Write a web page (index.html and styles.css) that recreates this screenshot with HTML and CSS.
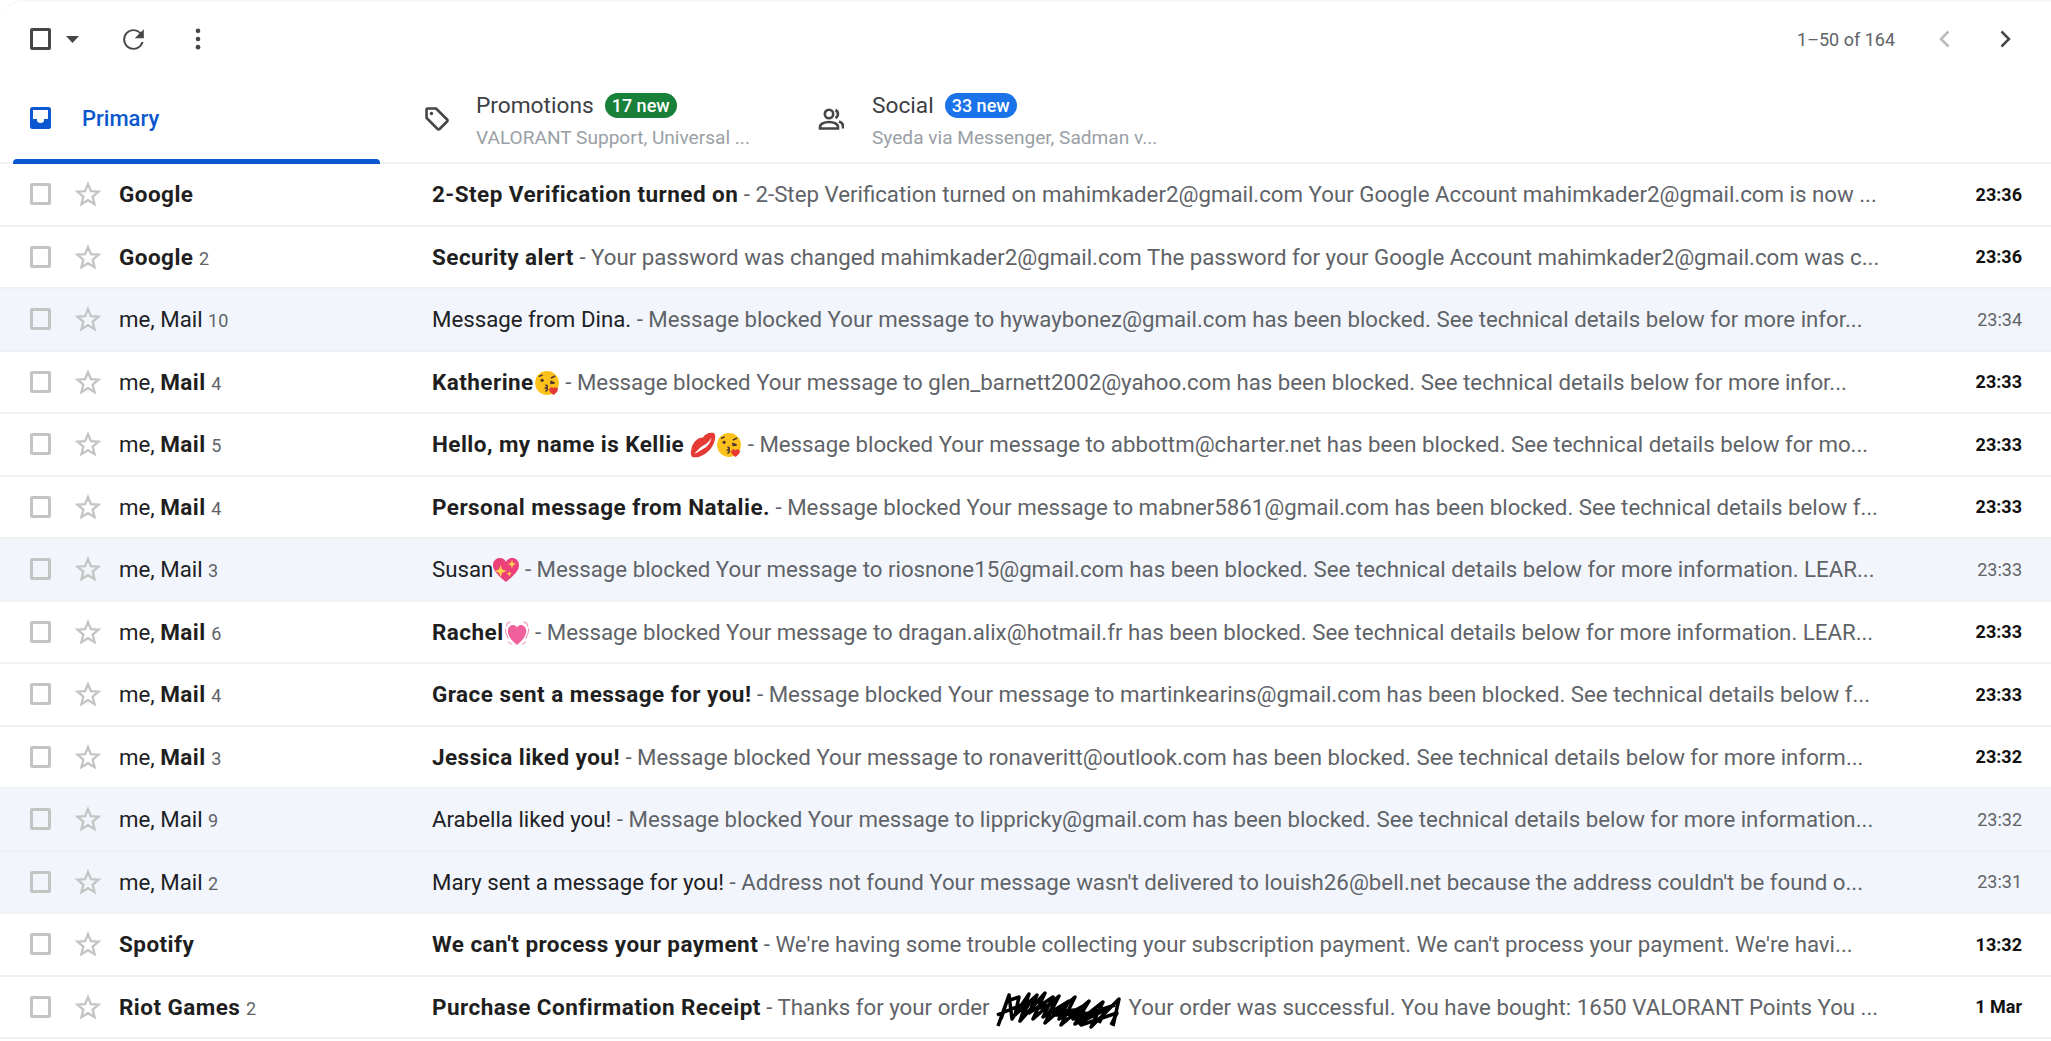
FILE: index.html
```html
<!DOCTYPE html>
<html lang="en">
<head>
  <meta charset="UTF-8">
  <title>Inbox</title>
  <link rel="stylesheet" href="styles.css">
</head>
<body>

<div class="mail">
  <div class="toolbar">
    <span class="box box-dark"></span>
    <svg class="caret" viewBox="0 0 13 7"><path d="M0 0h13L6.5 7z"/></svg>
    <svg class="tool refresh" viewBox="0 0 24 24"><path d="M17.65 6.35A7.96 7.96 0 0 0 12 4c-4.42 0-7.99 3.58-7.99 8s3.57 8 7.99 8c3.73 0 6.84-2.55 7.73-6h-1.6A6.5 6.5 0 0 1 12 18.5 6.5 6.5 0 0 1 12 5.5c1.8 0 3.4.74 4.58 1.92L13 11h7V4z"/></svg>
    <svg class="tool dots" viewBox="0 0 24 24"><circle cx="12" cy="5" r="2"/><circle cx="12" cy="12" r="2"/><circle cx="12" cy="19" r="2"/></svg>
    <div class="pager">
      <span class="range">1–50 of 164</span>
      <svg class="chev chev-off" viewBox="0 0 11 18"><path d="M9.5 1.5 2 9l7.5 7.5"/></svg>
      <svg class="chev" viewBox="0 0 11 18"><path d="M1.5 1.5 9 9l-7.5 7.5"/></svg>
    </div>
  </div>

  <div class="tabs">
    <div class="tab tab-primary">
      <svg class="inbox-icon" viewBox="0 0 21 22"><rect width="21" height="22" rx="2.500" fill="#0b57d0"/><path d="M3 3h15v9h-4v1.500c0 1.400-1.500 2.500-3.500 2.500S7 14.900 7 13.500V12H3z" fill="#fff"/></svg>
      <span class="tab-title">Primary</span>
    </div>
    <div class="tab tab-promo">
      <svg class="tab-icon tag" viewBox="0 0 26 26"><path d="M2.500 3.500a1 1 0 0 1 1-1h8.600l11 11a1.400 1.400 0 0 1 0 2l-7.500 7.500a1.400 1.400 0 0 1-2 0l-11-11z"/><circle cx="7.500" cy="7.500" r="1.700" class="icon-fill"/></svg>
      <div class="tab-text">
        <div class="tab-top"><span class="tab-name">Promotions</span><span class="badge badge-green">17 new</span></div>
        <div class="tab-sub">VALORANT Support, Universal ...</div>
      </div>
    </div>
    <div class="tab tab-social">
      <svg class="tab-icon people" viewBox="0 0 26 22"><circle cx="11" cy="6" r="4.200"/><path d="M2 20.500v-1.500c0-3 4-5 9-5s9 2 9 5v1.500z"/><path d="M17.500 2a4.500 4.500 0 0 1 0 8M21 13.500c2.500.8 4 2.500 4 4.500v2.500"/></svg>
      <div class="tab-text">
        <div class="tab-top"><span class="tab-name">Social</span><span class="badge badge-blue">33 new</span></div>
        <div class="tab-sub">Syeda via Messenger, Sadman v...</div>
      </div>
    </div>
  </div>

  <div class="row unread">
    <span class="box"></span><svg class="star" viewBox="0 0 24 24"><use href="#star-shape"/></svg>
    <div class="sender"><b>Google</b></div>
    <div class="line"><b>2-Step Verification turned on</b><span class="snippet"> - 2-Step Verification turned on mahimkader2@gmail.com Your Google Account mahimkader2@gmail.com is now ...</span></div>
    <div class="time">23:36</div>
  </div>
  <div class="row unread">
    <span class="box"></span><svg class="star" viewBox="0 0 24 24"><use href="#star-shape"/></svg>
    <div class="sender"><b>Google</b> <span class="count">2</span></div>
    <div class="line"><b>Security alert</b><span class="snippet"> - Your password was changed mahimkader2@gmail.com The password for your Google Account mahimkader2@gmail.com was c...</span></div>
    <div class="time">23:36</div>
  </div>
  <div class="row read">
    <span class="box"></span><svg class="star" viewBox="0 0 24 24"><use href="#star-shape"/></svg>
    <div class="sender">me, Mail <span class="count">10</span></div>
    <div class="line">Message from Dina.<span class="snippet"> - Message blocked Your message to hywaybonez@gmail.com has been blocked. See technical details below for more infor...</span></div>
    <div class="time">23:34</div>
  </div>
  <div class="row unread">
    <span class="box"></span><svg class="star" viewBox="0 0 24 24"><use href="#star-shape"/></svg>
    <div class="sender">me, <b>Mail</b> <span class="count">4</span></div>
    <div class="line"><b>Katherine</b><svg class="emoji" viewBox="0 0 24 24"><use href="#kiss-face"/></svg><span class="snippet"> - Message blocked Your message to glen_barnett2002@yahoo.com has been blocked. See technical details below for more infor...</span></div>
    <div class="time">23:33</div>
  </div>
  <div class="row unread">
    <span class="box"></span><svg class="star" viewBox="0 0 24 24"><use href="#star-shape"/></svg>
    <div class="sender">me, <b>Mail</b> <span class="count">5</span></div>
    <div class="line"><b>Hello, my name is Kellie </b><svg class="emoji" viewBox="0 0 24 24"><use href="#lips"/></svg><svg class="emoji" viewBox="0 0 24 24"><use href="#kiss-face"/></svg><span class="snippet"> - Message blocked Your message to abbottm@charter.net has been blocked. See technical details below for mo...</span></div>
    <div class="time">23:33</div>
  </div>
  <div class="row unread">
    <span class="box"></span><svg class="star" viewBox="0 0 24 24"><use href="#star-shape"/></svg>
    <div class="sender">me, <b>Mail</b> <span class="count">4</span></div>
    <div class="line"><b>Personal message from Natalie.</b><span class="snippet"> - Message blocked Your message to mabner5861@gmail.com has been blocked. See technical details below f...</span></div>
    <div class="time">23:33</div>
  </div>
  <div class="row read">
    <span class="box"></span><svg class="star" viewBox="0 0 24 24"><use href="#star-shape"/></svg>
    <div class="sender">me, Mail <span class="count">3</span></div>
    <div class="line">Susan<svg class="emoji" viewBox="0 0 24 24"><use href="#spark-heart"/></svg><span class="snippet"> - Message blocked Your message to riosnone15@gmail.com has been blocked. See technical details below for more information. LEAR...</span></div>
    <div class="time">23:33</div>
  </div>
  <div class="row unread">
    <span class="box"></span><svg class="star" viewBox="0 0 24 24"><use href="#star-shape"/></svg>
    <div class="sender">me, <b>Mail</b> <span class="count">6</span></div>
    <div class="line"><b>Rachel</b><svg class="emoji" viewBox="0 0 24 24"><use href="#beat-heart"/></svg><span class="snippet"> - Message blocked Your message to dragan.alix@hotmail.fr has been blocked. See technical details below for more information. LEAR...</span></div>
    <div class="time">23:33</div>
  </div>
  <div class="row unread">
    <span class="box"></span><svg class="star" viewBox="0 0 24 24"><use href="#star-shape"/></svg>
    <div class="sender">me, <b>Mail</b> <span class="count">4</span></div>
    <div class="line"><b>Grace sent a message for you!</b><span class="snippet"> - Message blocked Your message to martinkearins@gmail.com has been blocked. See technical details below f...</span></div>
    <div class="time">23:33</div>
  </div>
  <div class="row unread">
    <span class="box"></span><svg class="star" viewBox="0 0 24 24"><use href="#star-shape"/></svg>
    <div class="sender">me, <b>Mail</b> <span class="count">3</span></div>
    <div class="line"><b>Jessica liked you!</b><span class="snippet"> - Message blocked Your message to ronaveritt@outlook.com has been blocked. See technical details below for more inform...</span></div>
    <div class="time">23:32</div>
  </div>
  <div class="row read">
    <span class="box"></span><svg class="star" viewBox="0 0 24 24"><use href="#star-shape"/></svg>
    <div class="sender">me, Mail <span class="count">9</span></div>
    <div class="line">Arabella liked you!<span class="snippet"> - Message blocked Your message to lippricky@gmail.com has been blocked. See technical details below for more information...</span></div>
    <div class="time">23:32</div>
  </div>
  <div class="row read">
    <span class="box"></span><svg class="star" viewBox="0 0 24 24"><use href="#star-shape"/></svg>
    <div class="sender">me, Mail <span class="count">2</span></div>
    <div class="line">Mary sent a message for you!<span class="snippet"> - Address not found Your message wasn't delivered to louish26@bell.net because the address couldn't be found o...</span></div>
    <div class="time">23:31</div>
  </div>
  <div class="row unread">
    <span class="box"></span><svg class="star" viewBox="0 0 24 24"><use href="#star-shape"/></svg>
    <div class="sender"><b>Spotify</b></div>
    <div class="line"><b>We can't process your payment</b><span class="snippet"> - We're having some trouble collecting your subscription payment. We can't process your payment. We're havi...</span></div>
    <div class="time">13:32</div>
  </div>
  <div class="row unread">
    <span class="box"></span><svg class="star" viewBox="0 0 24 24"><use href="#star-shape"/></svg>
    <div class="sender"><b>Riot Games</b> <span class="count">2</span></div>
    <div class="line"><b>Purchase Confirmation Receipt</b><span class="snippet"> - Thanks for your order <svg class="scribble" viewBox="0 0 128 40"><path d="M3 37 14 6l3 24L34 5 25 32 50 4 38 30 64 7 50 34 80 8 66 36 94 12 80 35 108 13 96 38 124 10 118 37 M6 30 12 12 24 8 20 26 42 6 34 24 58 8 48 28 74 12 64 30 90 16 84 34 112 20 104 34 M2 26 36 12 28 24 60 14 54 24 88 20 78 30 120 16 M60 26 96 24 86 36 122 24 116 36"/></svg> Your order was successful. You have bought: 1650 VALORANT Points You ...</span></div>
    <div class="time">1 Mar</div>
  </div>
</div>

<svg class="defs" aria-hidden="true">
  <defs>
    <path id="star-shape" d="M12 3.500l2.500 6 6.500.5-5 4.300 1.600 6.400L12 17.300l-5.600 3.400L8 14.300 3 10l6.500-.5z"/>
    <g id="kiss-face">
      <circle cx="12" cy="12" r="11" fill="#fcc21b"/>
      <circle cx="7.500" cy="9.500" r="1.500" fill="#4e342e"/>
      <path d="M4.500 6 8 4.500M19.500 5.500 15.500 7.500M15 10.500l4 1.500-4 .5M10.500 14c2 0 2.500 1.500.5 2.500 2 .5 2 2.500-.5 3" fill="none" stroke="#4e342e" stroke-width="1.500"/>
      <path d="M14 18.500c0-2.500 2.800-3.500 4-1.500 1.200-2 4.500-1 4 1.500-.3 2-2.500 3.500-4 4.500-1.500-1-4-2.500-4-4.500z" fill="#e53935"/>
    </g>
    <g id="lips">
      <path d="M22 1c-4-1-8 1-10 4-4 0-8 3-10 8-1 4-2 8 0 10 3 1 8 0 12-3 5-3 8-8 9-13 .5-2 .5-5-1-6z" fill="#e53935"/>
      <path d="M4 20c3-3 5-6 9-8 3-1.500 5-4 7-7-1 4-3 8-7 10-3 2-6 4-9 5z" fill="#fff"/>
    </g>
    <g id="spark-heart">
      <path d="M12 23C6 18 0 13 0 7.500 0 3.500 3 1 6.500 1 9 1 11 2.500 12 4.500 13 2.500 15 1 17.500 1 21 1 24 3.500 24 7.500 24 13 18 18 12 23z" fill="#ec407a"/>
      <path d="M7 7.500l1.500 4 4 1.500-4 1.500L7 18.500l-1.500-4-4-1.500 4-1.500zM17.500 2.500l1 3 3 1-3 1-1 3-1-3-3-1 3-1zM15 13l.7 1.800 1.800.7-1.800.7L15 18l-.7-1.800-1.800-.7 1.800-.7z" fill="#ffd54f"/>
    </g>
    <g id="beat-heart">
      <path d="M12 23C7 19 3.500 15 3.500 10 3.500 6.500 6 4.500 8.500 4.500 10 4.500 11.200 5.500 12 7c.8-1.500 2-2.500 3.500-2.500 2.500 0 5 2 5 5.500 0 5-3.500 9-8.500 13z" fill="#f0609a"/>
      <path d="M1.500 8c-.5 3 .5 6 2.500 9M22.500 8c.5 3-.5 6-2.500 9M3.500 2 2 6M6 1.500 4 3M20.500 2 22 6M18 1.500 20 3M4 20l3 2.500M20 20l-3 2.500" fill="none" stroke="#f48fb1" stroke-width="1"/>
    </g>
  </defs>
</svg>

</body>
</html>
```

FILE: styles.css
```css
body {
  margin: 0;
  background: #fff;
  font-family: Roboto, "Liberation Sans", sans-serif;
  color: #202124;
  overflow: hidden;
}

.mail {
  border-top: 2px solid #f6f8fc;
  border-top-left-radius: 24px;
}

.defs {
  width: 0;
  height: 0;
}

.toolbar {
  height: 74px;
  box-sizing: border-box;
  padding: 0 40px 0 30px;
  display: flex;
  align-items: center;
}

.box {
  flex: none;
  display: block;
  box-sizing: border-box;
  width: 21px;
  height: 22px;
  border: 3px solid #c4c4c4;
  border-radius: 2px;
}

.box-dark {
  border-color: #444746;
}

.caret {
  width: 13px;
  height: 7px;
  margin-left: 15px;
  fill: #444746;
}

.tool {
  fill: #444746;
}

.refresh {
  width: 31px;
  height: 31px;
  margin-left: 39px;
}

.dots {
  width: 28px;
  height: 28px;
  margin-left: 35px;
}

.pager {
  margin-left: auto;
  display: flex;
  align-items: center;
}

.range {
  font-size: 18px;
  color: #5f6368;
  margin-right: 44px;
}

.chev {
  width: 11px;
  height: 18px;
  fill: none;
  stroke: #444746;
  stroke-width: 2.500;
}

.chev-off {
  stroke: #b8babc;
  margin-right: 50px;
}

.tabs {
  display: flex;
  height: 86px;
  border-bottom: 2px solid #eff1f3;
}

.tab {
  display: flex;
  align-items: center;
  box-sizing: border-box;
}

.tab-primary {
  position: relative;
  width: 367px;
  margin-left: 13px;
  padding: 0 0 4px 17px;
  height: 88px;
  color: #0b57d0;
}

.tab-primary::after {
  content: "";
  position: absolute;
  left: 0;
  right: 0;
  bottom: 0;
  height: 5px;
  background: #0b57d0;
  border-radius: 4px 4px 0 0;
}

.inbox-icon {
  width: 21px;
  height: 22px;
}

.tab-title {
  margin-left: 31px;
  font-size: 22px;
  font-weight: 500;
}

.tab-promo {
  margin-left: 44px;
  width: 394px;
}

.tab-icon {
  flex: none;
  fill: none;
  stroke: #444746;
  stroke-width: 2.600;
}

.tag {
  width: 26px;
  height: 26px;
}

.icon-fill {
  fill: #444746;
  stroke: none;
}

.people {
  width: 26px;
  height: 22px;
}

.tab-text {
  margin-left: 26px;
  padding-top: 3px;
}

.tab-social .tab-text {
  margin-left: 28px;
}

.tab-top {
  display: flex;
  align-items: center;
  gap: 11px;
  height: 28px;
}

.tab-name {
  font-size: 22.700px;
  color: #3c4043;
}

.badge {
  color: #fff;
  font-size: 18px;
  font-weight: 500;
  height: 25px;
  line-height: 25px;
  padding: 0 7px;
  border-radius: 13px;
}

.badge-green {
  background: #188038;
}

.badge-blue {
  background: #1a73e8;
}

.tab-sub {
  margin-top: 6px;
  font-size: 19.100px;
  line-height: 24px;
  color: #9aa0a6;
  white-space: nowrap;
}

.row {
  height: 62.500px;
  box-sizing: border-box;
  padding: 0 29px 0 30px;
  display: flex;
  align-items: center;
  border-bottom: 2px solid #eff1f3;
  font-size: 22.250px;
  white-space: nowrap;
}

.read {
  background: #f2f6fc;
}

.star {
  flex: none;
  width: 28px;
  height: 28px;
  margin-left: 23px;
  fill: none;
  stroke: #c4c4c4;
  stroke-width: 2;
}

.sender {
  flex: none;
  width: 313px;
  margin-left: 17px;
}

.count {
  font-size: 18px;
  color: #5f6368;
}

b {
  font-weight: 700;
  font-size: 22.500px;
  letter-spacing: 0.450px;
  color: #1f1f1f;
}

.line {
  flex: 1;
  min-width: 0;
  height: 60px;
  line-height: 60px;
  overflow: hidden;
}

.snippet {
  color: #5f6368;
}

.emoji {
  width: 26px;
  height: 26px;
  vertical-align: -6px;
}

.scribble {
  width: 128px;
  height: 40px;
  vertical-align: -14px;
  fill: none;
  stroke: #000;
  stroke-width: 3.500;
  stroke-linejoin: round;
}

.time {
  flex: none;
  width: 100px;
  text-align: right;
  font-size: 18px;
  color: #5f6368;
}

.unread .time {
  font-weight: 700;
  color: #111;
}
```
